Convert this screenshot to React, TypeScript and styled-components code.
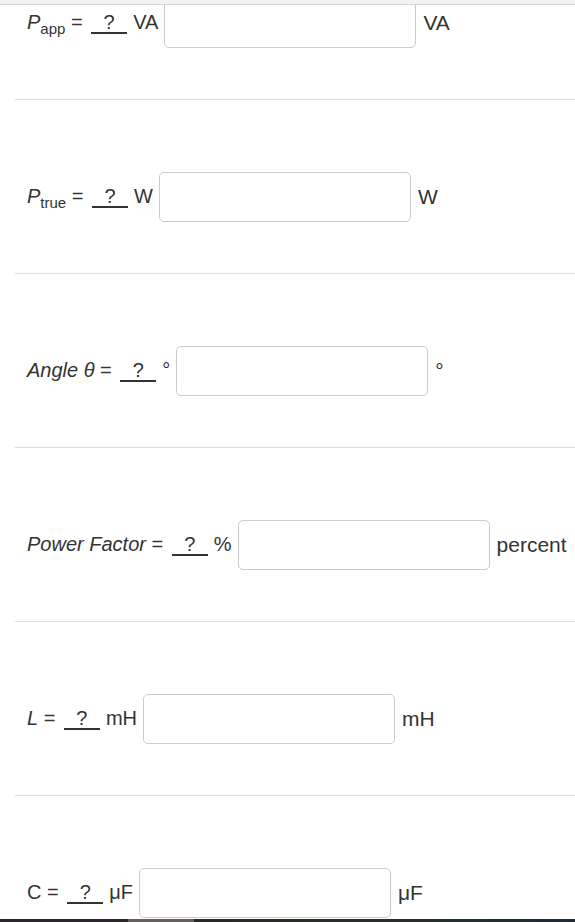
import React from 'react';
import styled, { createGlobalStyle } from 'styled-components';

const GlobalStyle = createGlobalStyle`
  html, body {
    margin: 0;
    padding: 0;
    background: #fff;
  }
  body {
    font-family: "Liberation Sans", Arial, sans-serif;
    color: #333;
  }
`;

const Page = styled.div`
  display: flex;
  flex-direction: column;
  height: 922px;
  overflow: hidden;
`;

const TopBar = styled.div`
  flex: 0 0 4px;
  background: #f4f4f4;
  border-bottom: 1px solid #d4d4d4;
  position: relative;
  z-index: 1;
`;

const Viewport = styled.div`
  flex: 1;
  overflow: hidden;
`;

const Content = styled.div`
  margin-top: -79px;
`;

const Row = styled.div`
  display: flex;
  align-items: center;
  height: 174px;
  margin-left: 15px;
  padding: 20px 0 0 12px;
  box-sizing: border-box;
  border-bottom: 1px solid #dcdcdc;
  font-size: 20px;
`;

const Label = styled.span`
  white-space: nowrap;
  margin-right: 6px;
`;

const Var = styled.i``;

const Sub = styled.sub`
  font-size: 15px;
  font-style: normal;
  vertical-align: -5px;
  line-height: 0;
`;

const Blank = styled.span`
  display: inline-block;
  width: 36px;
  text-align: center;
  border-bottom: 2px solid #333;
  line-height: 20px;
  margin: 0 6px 0 3px;
`;

const Field = styled.input`
  width: 252px;
  height: 50px;
  box-sizing: border-box;
  border: 1px solid #ccc;
  border-radius: 5px;
  background: #fff;
  font-size: 18px;
  padding: 6px 12px;
`;

const Unit = styled.span`
  margin-left: 7px;
  white-space: nowrap;
  font-size: 21px;
`;

const BottomBar = styled.div`
  flex: 0 0 3px;
  display: flex;
  background: linear-gradient(90deg, #2b2230 0%, #2a2a24 40%, #25302c 70%, #1f2b36 100%);
`;

const Thumb = styled.div`
  margin-left: 128px;
  width: 66px;
  background: #64605a;
`;

type Item = { label: React.ReactNode; unit: string };

const items: Item[] = [
  {
    label: (
      <>
        <Var>P</Var>
        <Sub>app</Sub> = <Blank>?</Blank>VA
      </>
    ),
    unit: 'VA',
  },
  {
    label: (
      <>
        <Var>P</Var>
        <Sub>true</Sub> = <Blank>?</Blank>W
      </>
    ),
    unit: 'W',
  },
  {
    label: (
      <>
        <Var>Angle θ</Var> = <Blank>?</Blank>°
      </>
    ),
    unit: '°',
  },
  {
    label: (
      <>
        <Var>Power Factor</Var> = <Blank>?</Blank>%
      </>
    ),
    unit: 'percent',
  },
  {
    label: (
      <>
        <Var>L</Var> = <Blank>?</Blank>mH
      </>
    ),
    unit: 'mH',
  },
  {
    label: (
      <>
        C = <Blank>?</Blank>μF
      </>
    ),
    unit: 'μF',
  },
];

export default function App() {
  return (
    <Page>
      <GlobalStyle />
      <TopBar />
      <Viewport>
        <Content>
          {items.map((item, i) => (
            <Row key={i}>
              <Label>{item.label}</Label>
              <Field type="text" />
              <Unit>{item.unit}</Unit>
            </Row>
          ))}
        </Content>
      </Viewport>
      <BottomBar>
        <Thumb />
      </BottomBar>
    </Page>
  );
}
